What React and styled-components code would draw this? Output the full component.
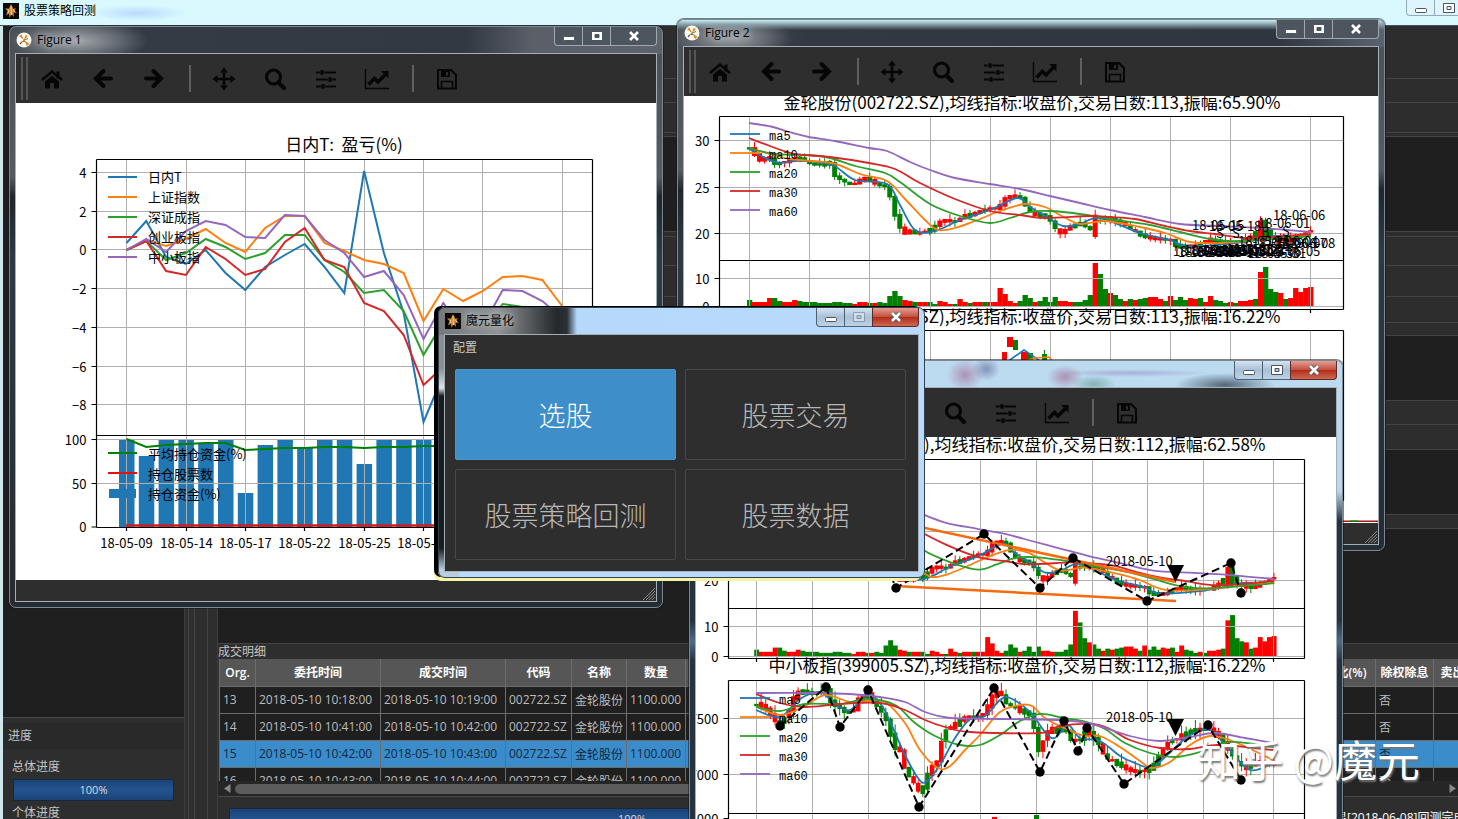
import React from 'react';
import styled, {createGlobalStyle} from 'styled-components';


const GlobalStyle = createGlobalStyle`
    * {
        box-sizing: border-box;
    }

    body {
        margin: 0;
        overflow: hidden;
        font-family: "Open Sans", "Noto Sans CJK SC", sans-serif;
        font-size: 12px;
    }

    button {
        font: inherit;
        padding: 0;
        margin: 0;
    }
`;

const CJK = '"Noto Sans CJK SC", sans-serif';
const BLUE = '#1f77b4';
const ORANGE = '#ff7f0e';
const GREEN = '#2ca02c';
const RED = '#d62728';
const PURPLE = '#9467bd';
const MA_COLORS = [BLUE, ORANGE, GREEN, RED, PURPLE];

/* ---------- main window ---------- */

const Desktop = styled.main`
    position: relative;
    height: 100vh;
    overflow: hidden;
    display: flex;
    flex-direction: column;
    background: #2e2e2e;
    color: #c4c4c4;
`;

const AppBar = styled.header`
    flex: none;
    height: 26px;
    display: flex;
    align-items: flex-start;
    gap: 5px;
    padding: 3px 0 0 3px;
    background: radial-gradient(ellipse 50px 8px at 138px 13px, #b9d9ff, transparent), #d9f9fe;
    border-bottom: 1px solid #40545c;
    color: #000;
`;

const AppTitle = styled.span`
    flex: 1;
    line-height: 16px;
`;

const AppControls = styled.div`
    display: flex;
    margin: -3px -51px 0 0;
`;

const AppBody = styled.div`
    flex: 1;
    min-height: 0;
    display: flex;
    border-left: 3px solid #cfe6ec;
`;

const Sidebar = styled.aside`
    flex: none;
    width: 182px;
    display: flex;
    flex-direction: column;
    border-right: 1px solid #3c3c3c;
`;

const SidebarView = styled.div`
    flex: none;
    height: 692px;
    background: #1f1f1f;
    border-bottom: 1px solid #4a4a4a;
`;

const SidebarTitle = styled.h2`
    flex: none;
    margin: 5px 0 6px;
    padding-left: 5px;
    font-size: 12px;
    font-weight: 400;
    line-height: 26px;
    background: #292929;
`;

const SidebarLabel = styled.span`
    padding-left: 9px;
    line-height: 24px;
`;

const Gutter = styled.div`
    flex: none;
    width: 32px;
    display: flex;
    gap: 12px;
    padding-left: 3px;

    &::before,
    &::after {
        content: "";
        width: 5px;
        border-left: 1px solid #454545;
        border-right: 1px solid #454545;
    }

    &::after {
        border-right: 0;
    }
`;

const Content = styled.section`
    flex: 1;
    min-width: 0;
    display: flex;
    flex-direction: column;
    border-left: 1px solid #3c3c3c;
`;

const Strip = styled.div`
    flex: none;
    height: ${props => props.$h}px;
    background: ${props => props.$dark ? '#1f1f1f' : '#2d2d2d'};
    border-bottom: 1px solid #444;
`;

const TableLabel = styled.h2`
    flex: none;
    margin: 0;
    font-size: 12px;
    font-weight: 400;
    line-height: 15px;
`;

const TableView = styled.div`
    flex: none;
    height: 122px;
    margin-left: 1px;
    overflow: hidden;
    background: #1f1f1f;
`;

const Table = styled.table`
    width: calc(100% + 38px);
    table-layout: fixed;
    border-collapse: collapse;
`;

const Col = styled.col`
    width: ${props => props.$w ? props.$w + 'px' : 'auto'};
`;

const HeadCell = styled.th`
    height: 27px;
    padding: 0;
    background: #565656;
    border: 1px solid #6c6c6c;
    border-top: 0;
    color: #fff;
    font-weight: 600;
    white-space: nowrap;
`;

const Row = styled.tr`
    background: ${props => props.$selected ? '#3a8cca' : '#1f1f1f'};
    color: ${props => props.$selected ? '#10283c' : '#bdbdbd'};
`;

const Cell = styled.td`
    height: 27px;
    padding: 0 0 0 3px;
    border: 1px solid #6c6c6c;
    white-space: nowrap;
    overflow: hidden;
`;

const ScrollTrack = styled.div`
    flex: none;
    height: 16px;
    display: flex;
    align-items: center;
    gap: 4px;
    padding: 0 2px 0 6px;
    background: #262626;
    border-bottom: 1px solid #4a4a4a;
`;

const ScrollThumb = styled.div`
    width: 70%;
    height: 10px;
    margin-right: auto;
    border-radius: 5px;
    background: #5c5c5c;
`;

const BottomRow = styled.div`
    flex: none;
    display: flex;
    gap: 300px;
    padding: 11px 0 0 11px;
    color: #fff;
    white-space: nowrap;
`;

const Progress = styled.div`
    flex: none;
    width: ${props => props.$w}px;
    height: 22px;
    margin-left: ${props => props.$inset || 0}px;
    border: 1px solid #14283f;
    background: linear-gradient(#1a4377, #24538f 50%, #1a4377);
    color: #dcdcdc;
    font-size: 11px;
    line-height: 20px;
    text-align: center;
`;

/* ---------- window frames ---------- */

const DARK_SIDES = 'linear-gradient(#4b5056, #565b61 150px, #1f262c 170px, #2d3a44 230px, #252c32)';

const glass = {
    dark: `radial-gradient(ellipse 70px 22px at 68px 14px, #a0a5aa, transparent) 0 0 / 100% 27px no-repeat, linear-gradient(90deg, #4a5057 0, #343b45 130px, #323943 70%, #5a5f68 80%, #5e626b) 0 0 / 100% 27px no-repeat, ${DARK_SIDES}`,
    edge: `linear-gradient(#c5edf5 0, #8fa6ae 4px, transparent 10px) 0 0 / 100% 27px no-repeat, radial-gradient(ellipse 60px 22px at 54px 18px, #9a9fa4, transparent) 0 0 / 100% 27px no-repeat, linear-gradient(90deg, #4a5057, #323943 130px, #30363f 85%, #5a6470) 0 0 / 100% 27px no-repeat, ${DARK_SIDES}`,
    light: 'radial-gradient(ellipse 18px 16px at 275px 14px, #a0557f88, transparent), radial-gradient(ellipse 14px 12px at 296px 8px, #55558888, transparent), radial-gradient(ellipse 18px 12px at 375px 16px, #a0557f88, transparent), radial-gradient(ellipse 22px 9px at 404px 23px, #55907f88, transparent), radial-gradient(ellipse 80px 4px at 440px 12px, #8a6fae66, transparent), radial-gradient(ellipse 50px 12px at 535px 24px, #3a4a5acc, transparent), linear-gradient(#bcdaf0 0 28px, #b9d7ef 130px, #26333f 160px, #26333f 260px, #4e6c88 280px, #26333f 300px)',
    dialog: 'linear-gradient(90deg, #777a7d 0, #8f9294 60px, #25282b 118px, #2c3034 128px, #b5d8fb 138px, #b9dafd 100%) 0 0 / 100% 27px no-repeat, linear-gradient(90deg, transparent 20px, #b9dafd 20px), linear-gradient(#8a8f93 60px, #dfe4e8 80px, #1a1c1f 88px, #1a1c1f 240px, #b9cfdf 262px)'
};

const Frame = styled.section`
    position: absolute;
    left: ${props => props.$x}px;
    top: ${props => props.$y}px;
    width: ${props => props.$w}px;
    height: ${props => props.$h}px;
    display: flex;
    flex-direction: column;
    padding: 0 5px 5px;
    border: 1px solid ${props => props.$glass === 'dialog' ? '#33414c' : '#7d8a94'};
    border-radius: 7px;
    background: ${props => glass[props.$glass]};
    box-shadow: ${props => props.$glass === 'dialog' ? '-4px -1px 0 #000, -4px 3px 0 #f6f4a6' : '0 0 0 1px #11151a88'};
`;

const TitleBar = styled.header`
    flex: none;
    height: 26px;
    display: flex;
    align-items: flex-start;
    gap: 5px;
    padding-left: 1px;
    color: #000;
`;

const Title = styled.h1`
    flex: 1;
    margin: 0;
    font-size: 12px;
    font-weight: 400;
    line-height: 26px;
    text-shadow: 0 0 6px #cfd4d8, 0 0 10px #aab0b5;
`;

const TitleIcon = styled.svg`
    flex: none;
    width: 16px;
    height: 16px;
    margin-top: ${props => props.$flush ? 0 : 5}px;
`;

const Client = styled.div`
    flex: 1;
    min-height: 0;
    display: flex;
    flex-direction: column;
    border: 1px solid #a3b0ba;
    background: #2e2e2e;
`;

const Controls = styled.div`
    display: flex;
`;

const controlColors = {
    dark: ['#4d555e', '#a0a8af', '#fff'],
    light: ['linear-gradient(#d3e4f3, #a9c0d6 50%, #bcd2e6)', '#4e6072', '#fff'],
    pale: ['#dff5fd', '#94a9b8', '#eef6fa'],
    red: ['linear-gradient(#e2a093, #c5503f 48%, #b02b17 50%, #cf6a50)', '#5d2a2a', '#fff']
};

const ControlButton = styled.button`
    width: ${props => props.$wide ? 47 : 29}px;
    height: ${props => props.$short ? 16 : 19}px;
    display: flex;
    align-items: center;
    justify-content: center;
    margin-left: -1px;
    background: ${props => controlColors[props.$tone][0]};
    border: 1px solid ${props => controlColors[props.$tone][1]};
    border-top: 0;
    border-radius: ${props => props.$corner || '0'};

    svg {
        opacity: ${props => props.disabled ? 0.4 : 1};
    }
`;

const Toolbar = styled.div`
    flex: none;
    height: 49px;
    display: flex;
    align-items: center;
    color: #060606;
`;

const Grip = styled.div`
    width: 7px;
    height: 43px;
    margin: 0 -2px 0 5px;
    border: solid #555;
    border-width: 0 2px;
`;

const Tool = styled.button`
    width: 51px;
    height: 40px;
    display: flex;
    align-items: center;
    justify-content: center;
    color: inherit;
    background: none;
    border: 0;
`;

const Divider = styled.div`
    width: 2px;
    height: 27px;
    margin: 0 7px 0 10px;
    background: #606060;
`;

const Canvas = styled.div`
    flex: 1;
    min-height: 0;
    overflow: hidden;
    background: #fff;

    svg {
        display: block;
        font-family: ${CJK};
        font-size: 13px;
    }
`;

const StatusBar = styled.footer`
    flex: none;
    height: 21px;
    display: flex;
    align-items: flex-end;
    justify-content: flex-end;
`;

const MenuBar = styled.nav`
    flex: none;
    height: 34px;
    padding: 0 8px;
`;

const MenuButton = styled.button`
    line-height: 26px;
    color: #c8c8c8;
    background: none;
    border: 0;
`;

const ChoiceGrid = styled.div`
    flex: 1;
    display: grid;
    grid-template-columns: 1fr 1fr;
    grid-template-rows: 1fr 1fr;
    gap: 9px;
    padding: 0 12px 11px 10px;
`;

const Choice = styled.button`
    && {
        font-family: ${CJK};
        font-size: 27px;
        font-weight: 300;
    }
    color: ${props => props.$active ? '#fff' : '#b8b8b8'};
    background: ${props => props.$active ? '#3d8ec9' : '#2e2e2e'};
    border: 1px solid ${props => props.$active ? '#4c96cc' : '#484848'};
    border-radius: 2px;
`;

const Watermark = styled.div`
    position: absolute;
    right: 38px;
    bottom: 31px;
    font-family: ${CJK};
    font-size: 43px;
    line-height: 60px;
    color: #fff;
    text-shadow: 1px 2px 2px #777;
    pointer-events: none;
`;

/* ---------- icons ---------- */

const icons = {
    home: (
        <>
            <path d="M1 12L11 3.5L21 12" fill="none" stroke="currentColor" strokeWidth="2.4" />
            <path d="M15.5 3.5h3v7h-3zM4 13.6L11 7.8L18 13.6V20.5H13V15H9V20.5H4z" />
        </>
    ),
    back: <path d="M19 10.500H5M11.500 3L4 10.500L11.500 18" fill="none" stroke="currentColor" strokeWidth="4" strokeLinecap="round" />,
    forward: <path d="M3 10.500H17M10.500 3L18 10.500L10.500 18" fill="none" stroke="currentColor" strokeWidth="4" strokeLinecap="round" />,
    move: (
        <>
            <path d="M11 2V20M2 11H20" stroke="currentColor" strokeWidth="2.6" />
            <path d="M11 -.5L15 4.500H7zM11 22.500L7 17.500H15zM-.5 11L4.500 7V15zM22.500 11L17.500 15V7z" />
        </>
    ),
    search: (
        <>
            <circle cx="9.5" cy="9" r="7" fill="none" stroke="currentColor" strokeWidth="3.2" />
            <path d="M14.500 14.500L20 20" stroke="currentColor" strokeWidth="4" strokeLinecap="round" />
        </>
    ),
    sliders: (
        <>
            <path d="M1 4.500H21M1 11.500H21M1 18.500H21" stroke="currentColor" strokeWidth="1.8" />
            <path d="M5 2h4v5H5zM13 9h4v5h-4zM6 16h4v5H6z" stroke="#2e2e2e" strokeWidth=".6" />
        </>
    ),
    chart: (
        <>
            <path d="M-.5 1V20.500H23" fill="none" stroke="currentColor" strokeWidth="1.4" />
            <path d="M2.500 16.500L8.500 10.500L12 14L19.500 6.500" fill="none" stroke="currentColor" strokeWidth="3.4" />
            <path d="M15 3H22.500V10.500z" />
        </>
    ),
    save: (
        <>
            <path d="M2 2H15L20 7V20.500H2z" fill="none" stroke="currentColor" strokeWidth="2" />
            <path d="M5.500 20V13.500H16.500V20" fill="none" stroke="currentColor" strokeWidth="1.6" />
            <path d="M5 2.500H14V9H5z" />
            <path d="M10 4h2v3.500h-2z" fill="#2e2e2e" />
        </>
    )
};

const Icon = ({name}) => (
    <svg width="22" height="22" viewBox="0 0 22 22" fill="currentColor" overflow="visible">{icons[name]}</svg>
);

const LeafIcon = ({flush}) => (
    <TitleIcon viewBox="0 0 16 16" $flush={flush}>
        <rect width="16" height="16" fill="#0a0705" />
        <path d="M8 1L9.500 4L10.500 6L13 5L11.500 7.500L14 10L10.500 9.500L11 14L8.500 11L6.500 15L6 10.500L3 12.500L4.500 8L2 5.500L6 5.500z" fill="#c98a3a" />
        <path d="M8 3L8.500 12M6 7L5 10M10.500 6.500L11.500 9" stroke="#f3d08a" strokeWidth="1" />
    </TitleIcon>
);

const PlotIcon = () => (
    <TitleIcon viewBox="0 0 16 16">
        <circle cx="8" cy="8" r="7.5" fill="#faf8f0" />
        <path d="M8 8L3 4L5.500 2.500zM8 8L13.500 12L11 14zM8 8L9.500 3L12 4z" fill="#e08b22" />
        <path d="M8 8L3.500 11L4.500 12.500zM7.500 7.500L9.500 9.500L7 10z" fill="#7c5a2c" />
        <path d="M8 8L12 6.500" stroke="#4c8f4c" />
    </TitleIcon>
);

const MinimizeGlyph = () => (
    <svg width="14" height="12" viewBox="0 0 14 12">
        <rect x="1.5" y="6.5" width="11" height="4" rx="1" fill="#fff" stroke="#4b5560" />
    </svg>
);

const MaximizeGlyph = () => (
    <svg width="14" height="12" viewBox="0 0 14 12">
        <path d="M1.500 1.500H12.500V10.500H1.500zM5 4.500V7.500H9V4.500z" fill="#fff" fillRule="evenodd" stroke="#4b5560" />
    </svg>
);

const CloseGlyph = () => (
    <svg width="14" height="12" viewBox="0 0 14 12">
        <path d="M3 2L11 10M11 2L3 10" stroke="#4b5560" strokeWidth="4.4" />
        <path d="M3 2L11 10M11 2L3 10" stroke="#fff" strokeWidth="2.6" />
    </svg>
);

const SizeGrip = () => (
    <svg width="14" height="14" viewBox="0 0 14 14">
        <path d="M1 13L13 1M4 13L13 4M7 13L13 7M10 13L13 10" stroke="#8a8a8a" />
    </svg>
);

const WindowControls = ({tone, closeTone, short, noMaximize}) => (
    <Controls>
        <ControlButton aria-label="Minimize" $tone={tone} $short={short} $corner="0 0 0 4px"><MinimizeGlyph /></ControlButton>
        <ControlButton aria-label="Maximize" $tone={tone} $short={short} disabled={noMaximize}><MaximizeGlyph /></ControlButton>
        <ControlButton aria-label="Close" $tone={closeTone || tone} $short={short} $wide $corner="0 0 4px 0"><CloseGlyph /></ControlButton>
    </Controls>
);

/* ---------- chart helpers ---------- */

const parse = text => text.trim().split(/\s+/).map(pair => pair.split(':').map(Number));

const points = list => list.map(p => p.join(',')).join(' ');

const curve = list => list.reduce((d, p, i) => {
    if (i === 0) {
        return `M${p[0]} ${p[1]}`;
    }
    const a = list[i - 2] || list[i - 1];
    const b = list[i - 1];
    const c = list[i + 1] || p;
    return `${d}C${b[0] + (p[0] - a[0]) / 6} ${b[1] + (p[1] - a[1]) / 6} ${p[0] - (c[0] - b[0]) / 6} ${p[1] - (c[1] - b[1]) / 6} ${p[0]} ${p[1]}`;
}, '');

const valueAt = (list, x) => {
    const i = list.findIndex(p => p[0] >= x);
    if (i === -1) {
        return list[list.length - 1][1];
    }
    if (i === 0) {
        return list[0][1];
    }
    const [x0, y0] = list[i - 1];
    const [x1, y1] = list[i];
    return y0 + (y1 - y0) * (x - x0) / (x1 - x0);
};

const VOLUME = `
6G 4R 4R 4R 8R 8G 5G 4R 4R 6R 5G 4G 4G 4G 3G 3G 3G 4G 4G 3G
3G 2R 4R 4R 3G 3R 4G 3G 10G 15G 10G 6R 5R 4G 4R 4R 4G 2G 5R 4R
2R 2G 7R 4R 3G 4R 4R 4G 4R 4R 18R 12R 5R 3R 5G 11G 8G 4R 5G 9G
4G 9G 5R 5R 4R 4G 4G 6G 11G 43R 32G 17G 13R 11G 7G 5R 7G 6R 7G 8G
9R 9R 7R 5G 10R 6G 9G 6G 8R 7R 8G 4R 10R 6G 5G 3G 4R 3G 5R 5R
6R 7G 34R 39G 17G 14G 13R 7G 8R 18R 14R 18R 19R
`.trim().split(/\s+/).map(v => ({h: parseInt(v, 10), up: v.endsWith('R')}));

const STOCK = parse(`
749:148 755:155 760:161 765:158 770:158 775:165 785:161 800:158 805:161 812:165 830:163 835:177 843:181
850:185 857:182 863:178 869:179 876:185 885:186 890:198 895:216 900:228 905:234 910:230 915:234 925:231
932:230 937:223 943:220 955:222 962:216 970:215 980:211 990:208 998:209 1003:200 1008:196 1020:197 1026:208
1032:214 1046:216 1051:222 1056:230 1061:235 1065:229 1080:223 1090:230 1095:222 1105:218 1120:222 1130:229
1140:235 1150:238 1170:240 1177:247 1195:246 1205:240 1230:243 1247:240 1260:228 1265:228 1270:238 1290:240 1311:230
`);

const STOCK_MA = [
    parse('749:149 775:162 800:161 832:165 855:180 887:184 900:205 915:230 935:231 960:220 990:210 1017:198 1030:207 1047:217 1063:226 1080:224 1100:218 1140:233 1170:240 1185:246 1215:245 1250:241 1275:236 1311:236'),
    parse('749:148 790:159 832:163 860:174 887:181 905:199 925:220 938:230 955:228 975:221 1000:211 1025:204 1045:207 1060:215 1080:224 1105:221 1140:227 1165:233 1190:242 1220:243 1260:240 1311:235'),
    parse('749:148 775:154 809:155 830:158 855:166 885:173 900:182 930:204 960:216 990:223 1010:218 1030:212 1050:211 1080:214 1110:219 1150:225 1180:232 1210:239 1240:241 1311:236'),
    parse('749:138 770:146 795:154 830:157 869:163 895:169 920:183 955:199 990:211 1020:215 1045:218 1090:216 1110:217 1135:219 1165:226 1190:231 1215:234 1250:238 1311:234'),
    parse('749:123 773:127 789:132 809:137 835:141 869:148 887:151 910:162 930:170 955:178 990:184 1020:189 1050:196 1080:203 1110:210 1145:217 1180:224 1220:226 1260:228 1311:232')
];

const INDEX = parse(`
756:705 762:706 768:711 775:721 780:724 787:714 795:695 800:691 815:694 826:690 832:705 838:706 845:713
852:712 858:700 868:693 872:700 878:708 884:716 889:730 895:748 902:752 905:772 912:780 920:795 925:782
930:767 936:765 940:745 947:727 955:725 962:718 980:717 988:706 994:692 1000:692 1005:703 1018:710 1032:715
1036:745 1040:756 1045:730 1058:731 1064:722 1068:740 1078:741 1087:730 1098:743 1105:758 1120:765 1128:770
1138:772 1152:768 1162:750 1167:743 1183:735 1193:730 1208:729 1220:737 1230:753 1243:768 1257:762 1273:765
`);

const INDEX_MA = [
    parse('756:710 780:717 800:699 820:692 835:704 850:710 868:694 882:706 892:726 905:755 918:778 926:782 940:765 955:738 970:719 985:716 1000:700 1010:698 1030:712 1045:732 1055:738 1068:725 1080:738 1100:741 1120:756 1135:763 1152:768 1165:757 1190:735 1210:730 1228:748 1250:770 1273:763'),
    parse('756:706 780:715 805:706 825:695 850:702 868:701 885:702 905:723 920:750 938:768 950:766 965:750 980:735 1000:712 1020:705 1032:706 1045:718 1064:728 1085:736 1100:736 1120:747 1140:761 1152:768 1170:762 1190:745 1210:736 1235:742 1273:760'),
    parse('756:707 780:711 805:704 840:704 868:699 895:705 915:723 935:736 960:745 980:745 1000:735 1020:721 1040:714 1064:718 1087:722 1105:729 1125:743 1150:753 1175:757 1200:752 1230:742 1273:747'),
    parse('756:694 780:703 805:707 840:704 880:703 905:710 925:720 945:727 970:732 1040:733 1060:726 1092:724 1110:729 1130:740 1160:748 1190:749 1220:745 1273:750'),
    parse('756:693 810:693 850:694 880:697 905:702 925:712 950:718 1000:719 1060:720 1092:724 1130:736 1160:741 1190:737 1215:733 1245:738 1273:743')
];

const Candles = ({list, start, step, amp = 1}) => VOLUME.map((v, i) => {
    const x = start + i * step;
    const close = valueAt(list, x);
    const open = valueAt(list, x - step);
    const big = amp === 1 && (i === 69 || i === 102 || i === 103) ? 7 : 0;
    const half = Math.max(1.2, Math.abs(close - open) / 2) + (i * 13 % 7) / 4 * amp + big;
    const mid = (close + open) / 2;
    const up = i * 11 % 13 % 6 * amp;
    const down = i * 17 % 11 % 5 * amp;
    return (
        <g key={i} fill={v.up ? '#f00' : 'green'}>
            <rect x={x - step / 2} y={mid - half} width={step} height={half * 2} />
            <rect x={x - 0.5} y={mid - half - up} width="1" height={half * 2 + up + down} />
        </g>
    );
});

const Volumes = ({start, step, base, scale}) => VOLUME.map((v, i) => (
    <rect key={i} x={start + i * step - step / 2} y={base - v.h * scale} width={step + 0.3} height={v.h * scale} fill={v.up ? '#f00' : 'green'} />
));

const Averages = ({lists}) => lists.map((list, i) => (
    <path key={i} d={curve(list)} fill="none" stroke={MA_COLORS[i]} strokeWidth="1.8" />
));

const Grid = ({xs, ys, left, right, top, bottom}) => (
    <path
        d={xs.map(x => `M${x} ${top}V${bottom}`).join('') + ys.map(y => `M${left} ${y}H${right}`).join('')}
        stroke="#b0b0b0"
        strokeWidth="1"
    />
);

const Axes = ({left, right, lines, ticks, xticks = [], bottom}) => (
    <>
        <path
            d={`M${left} ${lines[0]}V${lines[lines.length - 1]}M${right} ${lines[0]}V${lines[lines.length - 1]}` +
                lines.map(y => `M${left} ${y}H${right}`).join('') +
                ticks.map(t => `M${left - 5} ${t[0]}H${left}`).join('') +
                xticks.map(x => `M${x} ${bottom}V${bottom + 4}`).join('')}
            stroke="#000"
            strokeWidth="1.2"
        />
        {ticks.map(([y, label]) => (
            <text key={y} x={left - 10} y={y + 5} textAnchor="end">{label}</text>
        ))}
    </>
);

const MaLegend = ({x, y}) => ['ma5', 'ma10', 'ma20', 'ma30', 'ma60'].map((label, i) => (
    <g key={label}>
        <path d={`M${x} ${y + i * 19}h30`} stroke={MA_COLORS[i]} strokeWidth="1.8" />
        <text x={x + 39} y={y + i * 19 + 6} fontFamily='"Liberation Mono", monospace' fontSize="12">{label}</text>
    </g>
));

const ChartTitle = ({x, y, children}) => (
    <text x={x} y={y} textAnchor="middle" fontSize="17">{children}</text>
);

const ZigZag = ({list, from}) => (
    <>
        <polyline points={points(from ? [from, ...list] : list)} fill="none" stroke="#000" strokeWidth="2" strokeDasharray="8 4" />
        {list.map(p => <circle key={p[0]} cx={p[0]} cy={p[1]} r="4.7" />)}
    </>
);

/* ---------- figure 1 ---------- */

const RETURNS = [
    [243, 221, 257, 264, 250, 273, 290, 267, 255, 244, 267, 293, 171, 253, 313, 422, 375],
    [250, 240, 246, 239, 229, 243, 252, 228, 216, 216, 243, 251, 260, 264, 273, 321, 289, 301, 291, 277, 276, 280, 306],
    [250, 241, 260, 253, 239, 247, 259, 253, 235, 235, 260, 272, 293, 290, 311, 355, 322, 335, 330, 304, 307, 320],
    [250, 241, 271, 275, 247, 259, 275, 269, 242, 228, 260, 267, 303, 311, 335, 385, 367],
    [250, 239, 252, 231, 221, 225, 237, 238, 215, 216, 240, 253, 277, 271, 295, 339, 303, 330, 326, 290, 291, 301, 318]
];
const POSITIONS = [440, 456, 440, 440, 444, 440, 493, 445, 440, 448, 440, 440, 464, 440, 440, 440, 440, 440, 440, 440, 440, 440, 440];
const AVERAGE = [439, 447, 445, 444, 443, 443, 450, 449, 448, 448, 447, 447, 448, 447, 447, 446, 446, 446];
const DAYS = [[126.5, '18-05-09'], [186.5, '18-05-14'], [245.5, '18-05-17'], [304.5, '18-05-22'], [364.5, '18-05-25'], [423.5, '18-05-30'], [482.5, '18-06-04'], [562.5, '18-06-08']];
const dayX = i => 126.5 + i * 19.8;

const ReturnsChart = () => (
    <svg width="640" height="477" viewBox="16 103 640 477">
        <ChartTitle x={344} y={151}>日内T:&#160; 盈亏(%)</ChartTitle>
        {POSITIONS.map((y, i) => <rect key={i} x={dayX(i) - 7.5} y={y} width="15.5" height={527 - y} fill={BLUE} />)}
        <Grid
            xs={DAYS.map(d => d[0])}
            ys={[172.5, 211.5, 249.5, 288.5, 327.5, 366.5, 404.5, 439.5, 483.5]}
            left={96}
            right={592}
            top={160}
            bottom={527}
        />
        {RETURNS.map((list, i) => (
            <polyline key={i} points={points(list.map((y, n) => [dayX(n), y]))} fill="none" stroke={MA_COLORS[i]} strokeWidth="2" />
        ))}
        <polyline points={points(AVERAGE.map((y, n) => [dayX(n), y]))} fill="none" stroke="green" strokeWidth="2" />
        <path d="M126 525.500H562" stroke="#d01c1c" strokeWidth="2.4" />
        <Axes
            left={96.5}
            right={592.5}
            lines={[159.5, 435.5, 527.5]}
            ticks={[[172.5, '4'], [211.5, '2'], [249.5, '0'], [288.5, '−2'], [327.5, '−4'], [366.5, '−6'], [404.5, '−8'], [439.5, '100'], [483.5, '50'], [527, '0']]}
            xticks={DAYS.map(d => d[0])}
            bottom={527}
        />
        {DAYS.map(([x, label]) => <text key={x} x={x} y="548" textAnchor="middle">{label}</text>)}
        {['日内T', '上证指数', '深证成指', '创业板指', '中小板指'].map((label, i) => (
            <g key={label}>
                <path d={`M108 ${177 + i * 20}h29`} stroke={MA_COLORS[i]} strokeWidth="2" />
                <text x="148" y={182 + i * 20}>{label}</text>
            </g>
        ))}
        <path d="M108 453h29" stroke="green" strokeWidth="2" />
        <path d="M108 473h29" stroke="#e01010" strokeWidth="2" />
        <rect x="109" y="489" width="27" height="9" fill={BLUE} />
        <text x="148" y="459">平均持仓资金(%)</text>
        <text x="148" y="479">持仓股票数</text>
        <text x="148" y="499">持仓资金(%)</text>
    </svg>
);

/* ---------- figure 2 ---------- */

const F2_XS = [749.5, 809.5, 869.5, 930.5, 990.5, 1050.5, 1110.5, 1170.5, 1230.5, 1310.5];
const TRADES = [
    [1273, 220, '18-06-06'], [1258, 228, '18-06-01'], [1192, 230, '18-05-15'], [1209, 231, '18-05-18'],
    [1238, 246, '18-05-25'], [1252, 248, '18-05-29'], [1266, 246, '18-06-04'], [1275, 248, '18-06-07'], [1283, 248, '18-06-08'],
    [1173, 256, '18-05-09'], [1178, 257, '18-05-10'], [1184, 255, '18-05-11'], [1190, 257, '18-05-14'], [1196, 256, '18-05-15'],
    [1202, 255, '18-05-16'], [1208, 257, '18-05-17'], [1214, 255, '18-05-18'], [1220, 256, '18-05-21'], [1226, 254, '18-05-22'],
    [1232, 256, '18-05-23'], [1240, 254, '18-05-24'], [1248, 258, '18-05-30'], [1254, 258, '18-05-31'], [1268, 256, '18-06-05'],
    [1216, 238, 'S'], [1232, 238, 'S'], [1261, 237, 'B'], [1282, 236, 'S']
];

const StockChart = () => (
    <svg width="694" height="426" viewBox="684 96 694 426">
        <ChartTitle x={1032} y={109}>金轮股份(002722.SZ),均线指标:收盘价,交易日数:113,振幅:65.90%</ChartTitle>
        <Volumes start={749.5} step={5.01} base={306} scale={1} />
        <Grid xs={F2_XS} ys={[140.5, 187.5, 233.5, 278.5, 306.5]} left={720} right={1343} top={117} bottom={309} />
        <Candles list={STOCK} start={749.5} step={5.01} />
        <Averages lists={STOCK_MA} />
        <Axes
            left={719.5}
            right={1343.5}
            lines={[116.5, 260.5, 309.5]}
            ticks={[[140.5, '30'], [187.5, '25'], [233.5, '20'], [278.5, '10'], [306.5, '0']]}
            xticks={F2_XS}
            bottom={309}
        />
        <MaLegend x={730} y={134} />
        {TRADES.map(([x, y, label], i) => <text key={i} x={x} y={y}>{label}</text>)}

        <ChartTitle x={1032} y={323}>中小板指(399005.SZ),均线指标:收盘价,交易日数:113,振幅:16.22%</ChartTitle>
        <Grid xs={F2_XS} ys={[]} left={720} right={1343} top={331} bottom={500} />
        <path d="M1007 337h6v10h-6zM1002 352h5v12h-5zM1021 352h6v8h-6z" fill="#f00" />
        <path d="M1013 340h5v10h-5zM1027 353h6v9h-6zM1044 350h1v4h2v9h-5v-9h2z" fill="green" />
        <path d="M1007 362L1024 350L1043 363" fill="none" stroke={BLUE} strokeWidth="1.6" />
        <path d="M1018 363L1035 358L1049 357L1055 364" fill="none" stroke={ORANGE} strokeWidth="1.6" />
        <path d="M922 359L934 364" stroke={PURPLE} strokeWidth="1.6" />
        <text x="1192" y="371">18-05-15</text>
        <Axes left={719.5} right={1343.5} lines={[330.5, 500.5]} ticks={[]} />
        <path d="M749 521.500H1378" stroke="#a01818" strokeWidth="2" />
        <path d="M1350 521.500h8" stroke="green" strokeWidth="2" />
    </svg>
);

/* ---------- figure 3 ---------- */

const F3_XS = [756.5, 812.5, 868.5, 924.5, 980.5, 1036.5, 1092.5, 1147.5, 1203.5, 1273.5];
const toFigure3 = list => list.map(([x, y]) => [756.5 + (x - 749.5) * 0.922, 580.5 + (y - 233.5) * 1.04]);

const SignalChart = () => (
    <svg width="640" height="420" viewBox="696 437 640 420">
        <ChartTitle x={1017} y={451}>金轮股份(002722.SZ),均线指标:收盘价,交易日数:112,振幅:62.58%</ChartTitle>
        <Volumes start={756.5} step={4.62} base={656} scale={1.05} />
        <Grid xs={F3_XS} ys={[483.5, 531.5, 580.5, 626.5, 656.5]} left={729} right={1304} top={460} bottom={658} />
        <Candles list={toFigure3(STOCK)} start={756.5} step={4.62} />
        <Averages lists={STOCK_MA.map(toFigure3)} />
        <path d="M860 514L1176 582M896 586L1176 601" stroke="#f9690e" strokeWidth="2.6" />
        <ZigZag from={[868, 520]} list={[[896, 588], [984, 534], [1040, 588], [1073, 558], [1147, 601], [1231, 563], [1241, 593]]} />
        <path d="M1167 565H1184L1175.500 582z" />
        <text x="1106" y="566">2018-05-10</text>
        <Axes
            left={728.5}
            right={1304.5}
            lines={[459.5, 608.5, 658.5]}
            ticks={[[483.5, '30'], [531.5, '25'], [580.5, '20'], [626.5, '10'], [656.5, '0']]}
            xticks={F3_XS}
            bottom={658}
        />

        <ChartTitle x={1017} y={672}>中小板指(399005.SZ),均线指标:收盘价,交易日数:112,振幅:16.22%</ChartTitle>
        <Grid xs={F3_XS} ys={[718.5, 774.5]} left={729} right={1304} top={681} bottom={857} />
        <Candles list={INDEX} start={756.5} step={4.62} amp={1.6} />
        <Averages lists={INDEX_MA} />
        <ZigZag
            list={[[780, 726], [826, 687], [840, 727], [868, 690], [919, 807], [994, 688], [1040, 772], [1064, 721], [1078, 751], [1087, 728], [1124, 784], [1208, 725], [1241, 780]]}
        />
        <path d="M1167 719H1184L1175.500 736z" />
        <text x="1106" y="722">2018-05-10</text>
        <MaLegend x={740} y={698} />
        <path d="M992 817h5v4h-5z" fill="#f00" />
        <path d="M1034 815h5v6h-5z" fill="green" />
        <Axes left={728.5} right={1304.5} lines={[680.5, 813.5, 857]} ticks={[[718.5, '7500'], [774.5, '7000'], [818.5, '1000']]} />
    </svg>
);

/* ---------- windows ---------- */

const Tools = ({names}) => names.map(name => (
    <Tool key={name} aria-label={name}><Icon name={name} /></Tool>
));

const FigureWindow = ({title, x, y, w, h, tone, children}) => (
    <Frame $x={x} $y={y} $w={w} $h={h} $glass={tone}>
        <TitleBar>
            <PlotIcon />
            <Title>{title}</Title>
            <WindowControls tone={tone === 'light' ? 'light' : 'dark'} closeTone={tone === 'light' ? 'red' : 'dark'} />
        </TitleBar>
        <Client>
            <Toolbar>
                <Grip />
                <Tools names={['home', 'back', 'forward']} />
                <Divider />
                <Tools names={['move', 'search', 'sliders', 'chart']} />
                <Divider />
                <Tools names={['save']} />
            </Toolbar>
            <Canvas>{children}</Canvas>
            <StatusBar><SizeGrip /></StatusBar>
        </Client>
    </Frame>
);

const choices = ['选股', '股票交易', '股票策略回测', '股票数据'];

const LauncherWindow = () => (
    <Frame $x={438} $y={307} $w={487} $h={271} $glass="dialog">
        <TitleBar>
            <LeafIcon />
            <Title>魔元量化</Title>
            <WindowControls tone="light" closeTone="red" noMaximize />
        </TitleBar>
        <Client>
            <MenuBar><MenuButton>配置</MenuButton></MenuBar>
            <ChoiceGrid>
                {choices.map((label, i) => <Choice key={label} $active={i === 0}>{label}</Choice>)}
            </ChoiceGrid>
        </Client>
    </Frame>
);

const strips = [
    [53], [24], [30], [4], [95, true], [5], [29], [31], [26], [13],
    [65, true], [24], [25], [65, true], [14], [115, true]
];

const columns = [
    ['Org.', 36], ['委托时间', 125], ['成交时间', 125], ['代码', 66], ['名称', 55], ['数量', 59],
    ['成交价'], ['占比(%)', 60], ['除权除息', 58], ['卖出原因', 62]
];

const trades = [
    [13, '10:18:00', '10:19:00'],
    [14, '10:41:00', '10:42:00'],
    [15, '10:42:00', '10:43:00'],
    [16, '10:43:00', '10:44:00']
];

const TradeTable = () => (
    <Table>
        <colgroup>{columns.map(([name, w]) => <Col key={name} $w={w} />)}</colgroup>
        <thead>
            <tr>{columns.map(([name]) => <HeadCell key={name}>{name}</HeadCell>)}</tr>
        </thead>
        <tbody>
            {trades.map(([id, ordered, filled]) => (
                <Row key={id} $selected={id === 15}>
                    <Cell>{id}</Cell>
                    <Cell>2018-05-10 {ordered}</Cell>
                    <Cell>2018-05-10 {filled}</Cell>
                    <Cell>002722.SZ</Cell>
                    <Cell>金轮股份</Cell>
                    <Cell>1100.000</Cell>
                    <Cell />
                    <Cell />
                    <Cell>否</Cell>
                    <Cell />
                </Row>
            ))}
        </tbody>
    </Table>
);

const App = () => (
    <>
        <GlobalStyle />
        <Desktop>
            <AppBar>
                <LeafIcon flush />
                <AppTitle>股票策略回测</AppTitle>
                <AppControls><WindowControls tone="pale" short /></AppControls>
            </AppBar>
            <AppBody>
                <Sidebar>
                    <SidebarView />
                    <SidebarTitle>进度</SidebarTitle>
                    <SidebarLabel>总体进度</SidebarLabel>
                    <Progress role="progressbar" aria-label="总体进度" aria-valuenow={100} $w={161} $inset={10}>100%</Progress>
                    <SidebarLabel>个体进度</SidebarLabel>
                </Sidebar>
                <Gutter />
                <Content>
                    {strips.map(([h, dark], i) => <Strip key={i} $h={h} $dark={dark} />)}
                    <TableLabel>成交明细</TableLabel>
                    <TableView><TradeTable /></TableView>
                    <ScrollTrack>
                        <svg width="7" height="9" viewBox="0 0 7 9"><path d="M6.500 0V9L0 4.500z" fill="#888" /></svg>
                        <ScrollThumb />
                        <svg width="7" height="9" viewBox="0 0 7 9"><path d="M.5 0V9L7 4.500z" fill="#888" /></svg>
                    </ScrollTrack>
                    <BottomRow>
                        <Progress role="progressbar" aria-label="个体进度" aria-valuenow={100} $w={806}>100%</Progress>
                        <span>易[2018-06-08]回测完成</span>
                    </BottomRow>
                </Content>
            </AppBody>

            <FigureWindow title="Figure 1" x={9} y={26} w={654} h={582} tone="dark">
                <ReturnsChart />
            </FigureWindow>
            <FigureWindow title="Figure 2" x={677} y={19} w={708} h={532} tone="edge">
                <StockChart />
            </FigureWindow>
            <FigureWindow title="Figure 3" x={689} y={360} w={654} h={520} tone="light">
                <SignalChart />
            </FigureWindow>
            <LauncherWindow />
            <Watermark>知乎 @魔元</Watermark>
        </Desktop>
    </>
);

export default App;
